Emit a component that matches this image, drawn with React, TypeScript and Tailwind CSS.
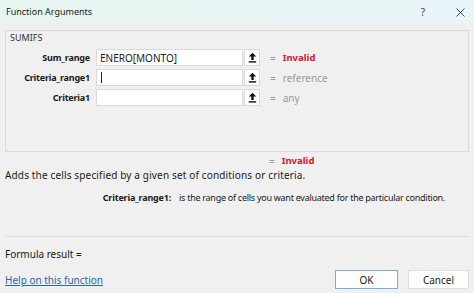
import React from "react";

function UploadIcon() {
  return (
    <svg width="9" height="11" viewBox="0 0 9 11" fill="none">
      <path d="M4.5 0.8 L8.2 4.6 H5.7 V8 H3.3 V4.6 H0.8 Z" fill="#111" />
      <rect x="0.8" y="9.2" width="7.4" height="1.4" fill="#111" />
    </svg>
  );
}

function ArgRow({
  label,
  value,
  result,
  tone,
  caret,
}: {
  label: string;
  value?: string;
  result: string;
  tone: "error" | "muted";
  caret?: boolean;
}) {
  return (
    <div className="flex h-[17px] items-center">
      <div className="w-[84px] shrink-0 text-right text-[9px] font-bold tracking-[-0.2px] text-[#1a1a1a]">{label}</div>
      <div className="ml-[6px] flex h-[17px] w-[147px] items-center border border-[#d9d9d9] bg-white px-[3px] text-[10px] text-[#1a1a1a]">
        {value}
        {caret && <span className="ml-px h-[11px] w-px bg-[#222]" />}
      </div>
      <div className="ml-px flex h-[17px] w-[16px] items-center justify-center border border-[#d9d9d9] bg-white">
        <UploadIcon />
      </div>
      <div className="ml-[10px] text-[10px] text-[#9a9a9a]">=</div>
      <div
        className={
          tone === "error"
            ? "ml-[7px] text-[9.5px] font-bold text-[#e0142b]"
            : "ml-[7px] text-[10px] text-[#9a9a9a]"
        }
      >
        {result}
      </div>
    </div>
  );
}

export default function App() {
  return (
    <div
      className="flex h-[293px] w-[474px] flex-col overflow-hidden bg-[#f0f0f0] leading-[12px] text-[#1a1a1a]"
      style={{ fontFamily: '"Noto Sans", "Open Sans", sans-serif' }}
    >
      <div className="flex h-[24px] shrink-0 items-center bg-gradient-to-r from-[#e7f5f0] to-[#e9f4f8] pl-[6px] pr-[9px]">
        <span className="text-[9px] text-[#1a1a1a]">Function Arguments</span>
        <span className="ml-auto text-[10px] text-[#444]">?</span>
        <svg className="ml-[31px]" width="9" height="9" viewBox="0 0 9 9">
          <path d="M0.5 0.5 L8.5 8.5 M8.5 0.5 L0.5 8.5" stroke="#333" strokeWidth="0.9" />
        </svg>
      </div>

      <div className="flex flex-1 flex-col px-[5px]">
        <div className="mt-[6px] h-[122px] border border-[#dcdcdc]">
          <div className="pl-[4px] pt-[1px] text-[9px] text-[#333]">SUMIFS</div>
          <div className="mt-[5px] flex flex-col gap-[3px]">
            <ArgRow label="Sum_range" value="ENERO[MONTO]" result="Invalid" tone="error" />
            <ArgRow label="Criteria_range1" result="reference" tone="muted" caret />
            <ArgRow label="Criteria1" result="any" tone="muted" />
          </div>
        </div>

        <div className="mt-[3px] flex h-[12px] items-center pl-[264px]">
          <span className="text-[10px] text-[#9a9a9a]">=</span>
          <span className="ml-[7px] text-[9.5px] font-bold text-[#e0142b]">Invalid</span>
        </div>

        <div className="mt-[2px] h-[12px] whitespace-nowrap text-[10px] tracking-[0.15px]">
          Adds the cells specified by a given set of conditions or criteria.
        </div>

        <div className="mt-[11px] flex h-[12px] items-center whitespace-nowrap">
          <span className="w-[166px] shrink-0 text-right text-[9px] font-bold tracking-[-0.2px]">Criteria_range1:</span>
          <span className="ml-[8px] text-[9px] tracking-[-0.27px]">
            is the range of cells you want evaluated for the particular condition.
          </span>
        </div>

        <div className="mt-[32px] h-px bg-[#dcdcdc]" />

        <div className="mt-[11px] h-[12px] text-[10px]">Formula result =</div>

        <div className="mt-[10px] flex items-center">
          <a href="#" className="text-[10px] text-[#2767b8] underline">
            Help on this function
          </a>
          <button
            type="button"
            className="ml-auto h-[19px] w-[63px] border border-[#7fa8d4] bg-[#fdfdfd] text-[10px] text-[#1a1a1a]"
          >
            OK
          </button>
          <button
            type="button"
            className="ml-[10px] h-[19px] w-[61px] border border-[#e0e0e0] bg-white text-[10px] text-[#1a1a1a]"
          >
            Cancel
          </button>
        </div>
      </div>
    </div>
  );
}
